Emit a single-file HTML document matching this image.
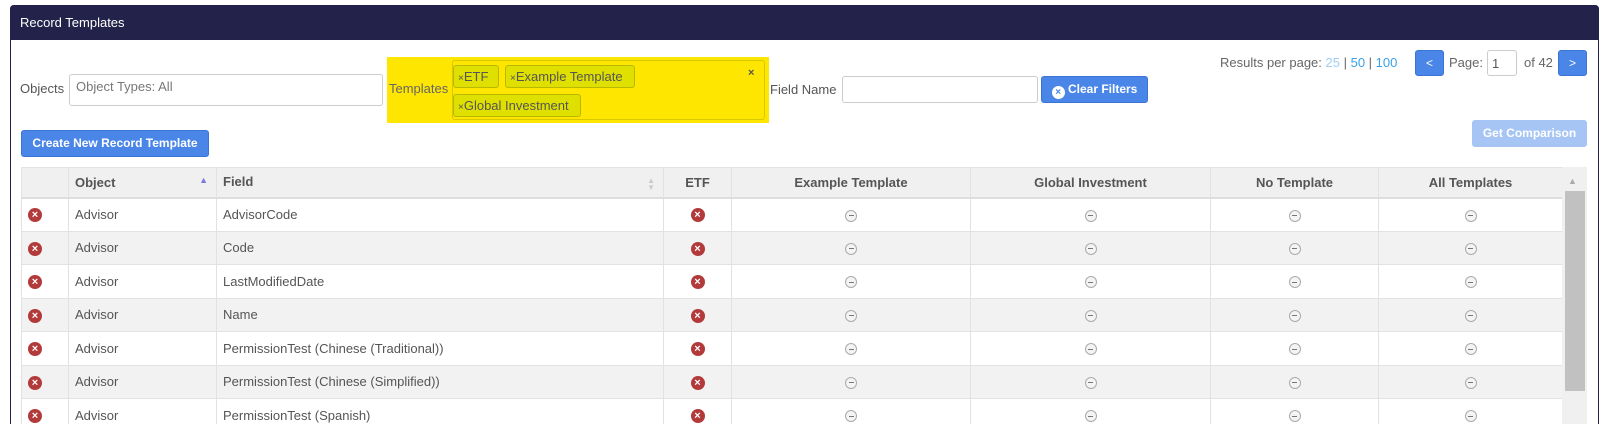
<!DOCTYPE html>
<html style="height:424px;overflow:hidden"><head><style>
*{box-sizing:border-box}
body{margin:0;width:1600px;height:424px;overflow:hidden;background:#fff;font-family:"Liberation Sans",Arial,sans-serif;font-size:13px;color:#555}
#w{position:relative;width:1600px;height:424px;overflow:hidden}
.a{position:absolute;white-space:nowrap}
.panel{left:10px;top:5px;width:1589px;height:440px;border:1px solid #22224a;border-radius:4px;background:#fff}
.hdr{left:10px;top:5px;width:1589px;height:35px;background:#22224a;border-radius:4px 4px 0 0;color:#fff;font-size:13px;line-height:35px;padding-left:10px}
.inp{border:1px solid #ccc;border-radius:3px;background:#fff}
.btn{background:#4a86e8;color:#fff;border-radius:3px;border:1px solid #3b74d4;text-align:center;font-weight:bold;font-size:12px}
.tag{border:1px solid #b8b800;background:#e0e000;border-radius:3px;height:23px;line-height:21px;padding:0 4px;color:#555;font-size:13px}
table{border-collapse:collapse;table-layout:fixed;position:absolute;left:21px;top:167px;width:1541px}
td,th{border:1px solid #e2e2e2;height:33.5px;padding:0 0 0 6px;font-size:13px}
th{height:30px;background:#f0f0f0;font-weight:bold;color:#555;border-bottom:2px solid #ddd}
tr:nth-child(odd) td{background:#f2f2f2}
.c{text-align:center;padding:0}
.x{display:inline-block;width:14px;height:14px;border-radius:50%;background:#b33a3a;color:#fff;font-size:11px;line-height:14px;text-align:center;font-weight:bold;vertical-align:middle}
.m{display:inline-block;width:12px;height:12px;border-radius:50%;border:1px solid #aaa;background:#f4f4f4;position:relative;vertical-align:middle}
.m:after{content:"";position:absolute;left:2.5px;right:2.5px;top:4.5px;height:1px;background:#777}
</style></head><body><div id="w">
<div class="a panel"></div>
<div class="a hdr">Record Templates</div>

<div class="a" style="left:20px;top:81px">Objects</div>
<div class="a inp" style="left:69px;top:74px;width:314px;height:32px;padding:4px 6px;color:#777">Object Types: All</div>

<div class="a" style="left:387px;top:57px;width:382px;height:66px;background:#ffe600"></div>
<div class="a" style="left:389px;top:81px;color:#666">Templates</div>
<div class="a" style="left:452px;top:60px;width:313px;height:60px;border:1px solid #d8c800;border-radius:3px"></div>
<div class="a tag" style="left:453px;top:65px;width:46px"><span style="font-size:10px">×</span>ETF</div>
<div class="a tag" style="left:505px;top:65px;width:130px"><span style="font-size:10px">×</span>Example Template</div>
<div class="a tag" style="left:453px;top:94px;width:128px"><span style="font-size:10px">×</span>Global Investment</div>
<div class="a" style="left:748px;top:67px;font-size:11px;font-weight:bold;color:#555">×</div>

<div class="a" style="left:770px;top:82px">Field Name</div>
<div class="a inp" style="left:842px;top:76px;width:196px;height:27px"></div>
<div class="a btn" style="left:1041px;top:76px;width:107px;height:27px;line-height:25px"><span style="display:inline-block;width:13px;height:13px;border-radius:50%;background:#fff;color:#4a86e8;font-size:10px;line-height:13px;vertical-align:-2px">×</span> Clear Filters</div>

<div class="a" style="left:1220px;top:55px;color:#666">Results per page: <span style="color:#9cd0f5">25</span> | <span style="color:#3aa0ea">50</span> | <span style="color:#3aa0ea">100</span></div>
<div class="a btn" style="left:1415px;top:50px;width:29px;height:26px;line-height:24px;font-weight:normal">&lt;</div>
<div class="a" style="left:1449px;top:55px;color:#666">Page:</div>
<div class="a inp" style="left:1487px;top:50px;width:30px;height:26px;padding:5px 4px;color:#555">1</div>
<div class="a" style="left:1524px;top:55px;color:#666">of 42</div>
<div class="a btn" style="left:1558px;top:50px;width:29px;height:26px;line-height:24px;font-weight:normal">&gt;</div>

<div class="a btn" style="left:21px;top:130px;width:188px;height:27px;line-height:25px">Create New Record Template</div>
<div class="a btn" style="left:1472px;top:120px;width:115px;height:27px;line-height:25px;background:#a6c5f5;border-color:#a6c5f5">Get Comparison</div>

<table>
<colgroup><col style="width:47px"><col style="width:148px"><col style="width:447px"><col style="width:68px"><col style="width:239px"><col style="width:240px"><col style="width:168px"><col style="width:184px"></colgroup>
<tr><th></th><th style="text-align:left">Object<span style="float:right;margin-right:8px;color:#7a7ae0;font-size:9px">▲</span></th><th style="text-align:left">Field<span style="float:right;margin-right:8px;color:#ccc;font-size:8px;line-height:7px;margin-top:3px">▲<br>▼</span></th><th class="c">ETF</th><th class="c">Example Template</th><th class="c">Global Investment</th><th class="c">No Template</th><th class="c">All Templates</th></tr>
<tr><td><span class="x">×</span></td><td>Advisor</td><td>AdvisorCode</td><td class="c"><span class="x">×</span></td><td class="c"><span class="m"></span></td><td class="c"><span class="m"></span></td><td class="c"><span class="m"></span></td><td class="c"><span class="m"></span></td></tr>
<tr><td><span class="x">×</span></td><td>Advisor</td><td>Code</td><td class="c"><span class="x">×</span></td><td class="c"><span class="m"></span></td><td class="c"><span class="m"></span></td><td class="c"><span class="m"></span></td><td class="c"><span class="m"></span></td></tr>
<tr><td><span class="x">×</span></td><td>Advisor</td><td>LastModifiedDate</td><td class="c"><span class="x">×</span></td><td class="c"><span class="m"></span></td><td class="c"><span class="m"></span></td><td class="c"><span class="m"></span></td><td class="c"><span class="m"></span></td></tr>
<tr><td><span class="x">×</span></td><td>Advisor</td><td>Name</td><td class="c"><span class="x">×</span></td><td class="c"><span class="m"></span></td><td class="c"><span class="m"></span></td><td class="c"><span class="m"></span></td><td class="c"><span class="m"></span></td></tr>
<tr><td><span class="x">×</span></td><td>Advisor</td><td>PermissionTest (Chinese (Traditional))</td><td class="c"><span class="x">×</span></td><td class="c"><span class="m"></span></td><td class="c"><span class="m"></span></td><td class="c"><span class="m"></span></td><td class="c"><span class="m"></span></td></tr>
<tr><td><span class="x">×</span></td><td>Advisor</td><td>PermissionTest (Chinese (Simplified))</td><td class="c"><span class="x">×</span></td><td class="c"><span class="m"></span></td><td class="c"><span class="m"></span></td><td class="c"><span class="m"></span></td><td class="c"><span class="m"></span></td></tr>
<tr><td><span class="x">×</span></td><td>Advisor</td><td>PermissionTest (Spanish)</td><td class="c"><span class="x">×</span></td><td class="c"><span class="m"></span></td><td class="c"><span class="m"></span></td><td class="c"><span class="m"></span></td><td class="c"><span class="m"></span></td></tr>
</table>

<div class="a" style="left:1562px;top:167px;width:25px;height:260px;background:#f0f0f0"></div>
<div class="a" style="left:1568px;top:176px;color:#aaa;font-size:9px">▲</div>
<div class="a" style="left:1565px;top:191px;width:20px;height:200px;background:#c1c1c1"></div>
</div></body></html>
